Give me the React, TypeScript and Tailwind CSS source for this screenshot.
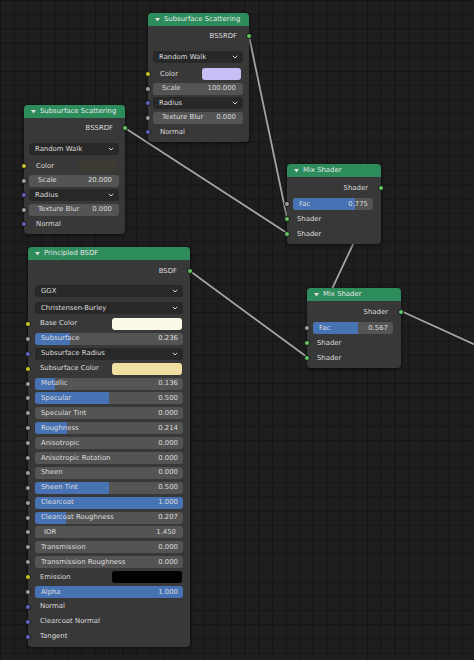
import type { ReactNode } from 'react'

type Sock = 'col' | 'val' | 'vec' | 'sh'

const SOCK: Record<Sock, string> = {
  col: 'bg-[#c7c729]',
  val: 'bg-[#a1a1a1]',
  vec: 'bg-[#6363c7]',
  sh: 'bg-[#63c763]',
}

function Socket({ t, side }: { t: Sock; side: 'l' | 'r' }) {
  return (
    <span
      className={`absolute top-1/2 -translate-y-1/2 w-[6px] h-[6px] rounded-full border border-[#151515] ${SOCK[t]} ${
        side === 'l' ? 'left-[-3px]' : 'right-[-3px]'
      }`}
    />
  )
}

function Chevron() {
  return (
    <svg width="6" height="4" viewBox="0 0 6 4" className="shrink-0">
      <polyline points="0.8,0.8 3,3 5.2,0.8" fill="none" stroke="#cfcfcf" strokeWidth="1" />
    </svg>
  )
}

function Node({ pos, title, children }: { pos: string; title: string; children: ReactNode }) {
  return (
    <div
      className={`absolute rounded-[4px] bg-[#383838] shadow-[0_1px_4px_rgba(0,0,0,0.6)] ${pos}`}
    >
      <div className="flex items-center h-[13px] rounded-t-[4px] bg-[#2c8c5c] pl-[7px] gap-[4px] text-[#e8e8e8]">
        <svg width="5" height="4" viewBox="0 0 5 4">
          <polygon points="0,0 5,0 2.5,3.5" fill="#e0e0e0" />
        </svg>
        <span className="leading-none">{title}</span>
      </div>
      {children}
    </div>
  )
}

function Out({ label, h, pr }: { label: string; h: string; pr: string }) {
  return (
    <div className={`relative flex items-center justify-end ${h} ${pr}`}>
      <span>{label}</span>
      <Socket t="sh" side="r" />
    </div>
  )
}

function Drop({ label, h, pad, sock }: { label: string; h: string; pad: string; sock?: Sock }) {
  return (
    <div className={`relative flex items-center ${h} ${pad}`}>
      <div className="flex-1 flex items-center justify-between h-[12px] rounded-[3px] bg-[#282828] pl-[6px] pr-[5px]">
        <span>{label}</span>
        <Chevron />
      </div>
      {sock && <Socket t={sock} side="l" />}
    </div>
  )
}

function Label({ label, h, pl, sock }: { label: string; h: string; pl: string; sock: Sock }) {
  return (
    <div className={`relative flex items-center ${h} ${pl}`}>
      <span>{label}</span>
      <Socket t={sock} side="l" />
    </div>
  )
}

function Swatch({ label, h, sw, color }: { label: string; h: string; sw: string; color: string }) {
  return (
    <div className={`relative flex items-center justify-between ${h} pl-[12px] pr-[8px]`}>
      <span>{label}</span>
      <span className={`h-[12px] rounded-[3px] ${sw} ${color}`} />
      <Socket t="col" side="l" />
    </div>
  )
}

function Slider({
  label,
  value,
  fill,
  h,
  pad,
  num,
}: {
  label: string
  value: string
  fill?: number
  h: string
  pad: string
  num?: boolean
}) {
  return (
    <div className={`relative flex items-center ${h} ${pad}`}>
      <div className="relative flex-1 h-[12px] rounded-[3px] bg-[#545454] overflow-hidden">
        {fill !== undefined && (
          <div className="absolute inset-y-0 left-0 bg-[#4772b3]" style={{ width: `${fill * 100}%` }} />
        )}
        <div
          className={`relative flex items-center justify-between h-full ${
            num ? 'pl-[9px] pr-[7px]' : 'pl-[6px] pr-[5px]'
          }`}
        >
          <span>{label}</span>
          <span>{value}</span>
        </div>
      </div>
      <Socket t="val" side="l" />
    </div>
  )
}

function SSS({ pos, color, scale }: { pos: string; color: string; scale: string }) {
  const h = 'h-[14.6px]'
  const pad = 'pl-[5px] pr-[6px]'
  return (
    <Node pos={pos} title="Subsurface Scattering">
      <div className="h-[3px]" />
      <Out label="BSSRDF" h="h-[14px]" pr="pr-[12px]" />
      <div className="h-[7px]" />
      <Drop label="Random Walk" h="h-[14px]" pad={pad} />
      <div className="h-[2.7px]" />
      <Swatch label="Color" h={h} sw="w-[39px]" color={color} />
      <Slider label="Scale" value={scale} h={h} pad={pad} num />
      <Drop label="Radius" h={h} pad={pad} sock="vec" />
      <Slider label="Texture Blur" value="0.000" h={h} pad={pad} num />
      <Label label="Normal" h={h} pl="pl-[12px]" sock="vec" />
      <div className="h-[2.5px]" />
    </Node>
  )
}

function Mix({ pos, fac, facValue }: { pos: string; fac: number; facValue: string }) {
  const h = 'h-[15px]'
  return (
    <Node pos={pos} title="Mix Shader">
      <div className="h-[4px]" />
      <Out label="Shader" h="h-[14px]" pr="pr-[13px]" />
      <div className="h-[1.5px]" />
      <Slider label="Fac" value={facValue} fill={fac} h={h} pad="pl-[6px] pr-[8px]" />
      <Label label="Shader" h={h} pl="pl-[10px]" sock="sh" />
      <Label label="Shader" h={h} pl="pl-[10px]" sock="sh" />
      <div className="h-[2.5px]" />
    </Node>
  )
}

const FACTORS: { label: string; value: string; fill?: number; num?: boolean }[] = [
  { label: 'Metallic', value: '0.136', fill: 0.136 },
  { label: 'Specular', value: '0.500', fill: 0.5 },
  { label: 'Specular Tint', value: '0.000', fill: 0 },
  { label: 'Roughness', value: '0.214', fill: 0.214 },
  { label: 'Anisotropic', value: '0.000', fill: 0 },
  { label: 'Anisotropic Rotation', value: '0.000', fill: 0 },
  { label: 'Sheen', value: '0.000', fill: 0 },
  { label: 'Sheen Tint', value: '0.500', fill: 0.5 },
  { label: 'Clearcoat', value: '1.000', fill: 1 },
  { label: 'Clearcoat Roughness', value: '0.207', fill: 0.207 },
  { label: 'IOR', value: '1.450', num: true },
  { label: 'Transmission', value: '0.000', fill: 0 },
  { label: 'Transmission Roughness', value: '0.000', fill: 0 },
]

function Principled() {
  const h = 'h-[14.9px]'
  const pad = 'px-[7px]'
  return (
    <Node pos="left-[28px] top-[247px] w-[162px]" title="Principled BSDF">
      <div className="h-[4px]" />
      <Out label="BSDF" h="h-[14px]" pr="pr-[13px]" />
      <div className="h-[6px]" />
      <Drop label="GGX" h="h-[14px]" pad={pad} />
      <div className="h-[3px]" />
      <Drop label="Christensen-Burley" h="h-[14px]" pad={pad} />
      <div className="h-[1.5px]" />
      <Swatch label="Base Color" h={h} sw="w-[70px]" color="bg-[#fdf9e8]" />
      <Slider label="Subsurface" value="0.236" fill={0.236} h={h} pad={pad} />
      <Drop label="Subsurface Radius" h={h} pad={pad} sock="vec" />
      <Swatch label="Subsurface Color" h={h} sw="w-[70px]" color="bg-[#efe0a2]" />
      {FACTORS.map((f) => (
        <Slider key={f.label} label={f.label} value={f.value} fill={f.fill} num={f.num} h={h} pad={pad} />
      ))}
      <Swatch label="Emission" h={h} sw="w-[70px]" color="bg-[#000000]" />
      <Slider label="Alpha" value="1.000" fill={1} h={h} pad={pad} />
      <Label label="Normal" h={h} pl="pl-[12px]" sock="vec" />
      <Label label="Clearcoat Normal" h={h} pl="pl-[12px]" sock="vec" />
      <Label label="Tangent" h={h} pl="pl-[12px]" sock="vec" />
      <div className="h-[3px]" />
    </Node>
  )
}

const LINKS = [
  [249, 36, 287, 218],
  [125, 128, 287, 233],
  [380, 187, 307, 342],
  [190, 271, 307, 357],
  [401, 311, 480, 347],
]

export default function App() {
  return (
    <div className="relative w-[474px] h-[660px] overflow-hidden bg-[#1e1e1e] bg-[linear-gradient(to_right,#151515_1px,transparent_1px),linear-gradient(to_bottom,#151515_1px,transparent_1px)] bg-[size:13.6px_14.2px] font-['DejaVu_Sans',sans-serif] text-[6.9px] text-[#dedede] leading-none">
      <svg className="absolute inset-0" width="474" height="660">
        {LINKS.map(([x1, y1, x2, y2], i) => (
          <g key={i}>
            <line x1={x1} y1={y1} x2={x2} y2={y2} stroke="#1a1a1a" strokeWidth="3.4" />
            <line x1={x1} y1={y1} x2={x2} y2={y2} stroke="#a4a4a4" strokeWidth="1.8" />
          </g>
        ))}
      </svg>
      <SSS pos="left-[148px] top-[13px] w-[101px]" color="bg-[#c8bff6]" scale="100.000" />
      <SSS pos="left-[24px] top-[105px] w-[101px]" color="bg-[#3c3a32]" scale="20.000" />
      <Mix pos="left-[287px] top-[164px] w-[94px]" fac={0.775} facValue="0.775" />
      <Mix pos="left-[307px] top-[288px] w-[94px]" fac={0.567} facValue="0.567" />
      <Principled />
    </div>
  )
}
